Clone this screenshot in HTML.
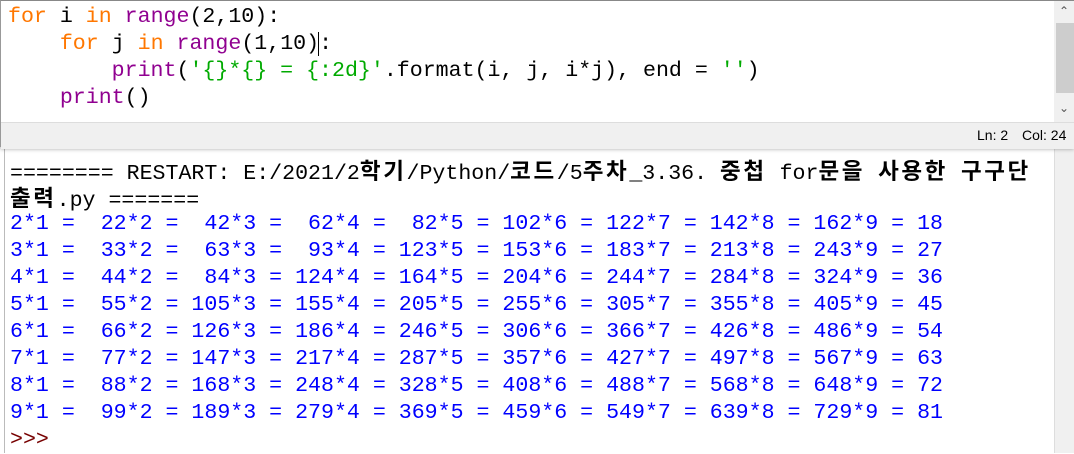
<!DOCTYPE html>
<html><head><meta charset="utf-8"><style>
body{margin:0;width:1074px;height:453px;overflow:hidden;background:#fff;position:relative;font-family:"Liberation Mono","Noto Sans CJK KR",monospace;font-size:21.6px}
.l{position:absolute;white-space:pre;line-height:27px;height:27px}
.k{color:#ff7700}.b{color:#900090}.s{color:#00aa00}.o{color:#0000ff}.p{color:#770000}
#sb2{position:absolute;left:1054px;top:147px;width:20px;height:306px;background:#f0f0f0;border-left:1px solid #ddd}
#gut{position:absolute;left:4px;top:147px;width:1px;height:306px;background:#bbb}
#ed{position:absolute;left:0;top:0;width:1074px;height:147px;background:#fff;box-shadow:0 2px 4px rgba(0,0,0,.35);border-top:1px solid #888;box-sizing:border-box;border-left:1px solid #999}
#sb{position:absolute;left:1053px;top:0;width:21px;height:121px;background:#f0f0f0}
#thumb{position:absolute;left:1055px;top:22px;width:18px;height:70px;background:#cdcdcd}
#status{position:absolute;left:0;top:121px;width:1074px;height:26px;background:#f0f0f0;border-top:1px solid #ddd;font-family:"Liberation Sans",sans-serif;font-size:14px}
.kr{font-family:"Noto Sans CJK KR","Liberation Sans",sans-serif;font-weight:bold;font-size:22.5px;letter-spacing:2.6px}
</style></head><body>
<div class="l p" style="left:10px;top:128px">&gt;&gt;&gt;</div>
<div id="gut"></div>
<div id="sb2"></div>
<div class="l" style="left:10px;top:157px">======== RESTART: E:/2021/2<span class="kr">학기</span>/Python/<span class="kr">코드</span>/5<span class="kr">주차</span>_3.36. <span class="kr">중첩</span> for<span class="kr">문을</span> <span class="kr">사용한</span> <span class="kr">구구단</span></div>
<div class="l" style="left:10px;top:184px"><span class="kr">출력</span>.py =======</div>
<div class="l o" style="left:10px;top:211px">2*1 =  22*2 =  42*3 =  62*4 =  82*5 = 102*6 = 122*7 = 142*8 = 162*9 = 18</div>
<div class="l o" style="left:10px;top:238px">3*1 =  33*2 =  63*3 =  93*4 = 123*5 = 153*6 = 183*7 = 213*8 = 243*9 = 27</div>
<div class="l o" style="left:10px;top:265px">4*1 =  44*2 =  84*3 = 124*4 = 164*5 = 204*6 = 244*7 = 284*8 = 324*9 = 36</div>
<div class="l o" style="left:10px;top:292px">5*1 =  55*2 = 105*3 = 155*4 = 205*5 = 255*6 = 305*7 = 355*8 = 405*9 = 45</div>
<div class="l o" style="left:10px;top:319px">6*1 =  66*2 = 126*3 = 186*4 = 246*5 = 306*6 = 366*7 = 426*8 = 486*9 = 54</div>
<div class="l o" style="left:10px;top:346px">7*1 =  77*2 = 147*3 = 217*4 = 287*5 = 357*6 = 427*7 = 497*8 = 567*9 = 63</div>
<div class="l o" style="left:10px;top:373px">8*1 =  88*2 = 168*3 = 248*4 = 328*5 = 408*6 = 488*7 = 568*8 = 648*9 = 72</div>
<div class="l o" style="left:10px;top:400px">9*1 =  99*2 = 189*3 = 279*4 = 369*5 = 459*6 = 549*7 = 639*8 = 729*9 = 81</div>
<div class="l p" style="left:10px;top:427px">&gt;&gt;&gt;</div>

<div id="ed">
<div class="l" style="left:7px;top:3px"><span class="k">for</span> i <span class="k">in</span> <span class="b">range</span>(2,10):</div>
<div class="l" style="left:7px;top:30px">    <span class="k">for</span> j <span class="k">in</span> <span class="b">range</span>(1,10)<span style="border-left:1.5px solid #000;margin-left:-1px"></span>:</div>
<div class="l" style="left:7px;top:57px">        <span class="b">print</span>(<span class="s">'{}*{} = {:2d}'</span>.format(i, j, i*j), end = <span class="s">''</span>)</div>
<div class="l" style="left:7px;top:84px">    <span class="b">print</span>()</div>
<div id="sb"></div><div id="thumb"></div>
<div style="position:absolute;left:1058px;top:3px;font:12px 'Liberation Sans';color:#555">&#8963;</div>
<div style="position:absolute;left:1058px;top:100px;font:12px 'Liberation Sans';color:#555">&#8964;</div>
<div id="status"><span style="position:absolute;left:976px;top:4px">Ln: 2</span><span style="position:absolute;left:1021px;top:4px">Col: 24</span></div>
</div>
</body></html>
